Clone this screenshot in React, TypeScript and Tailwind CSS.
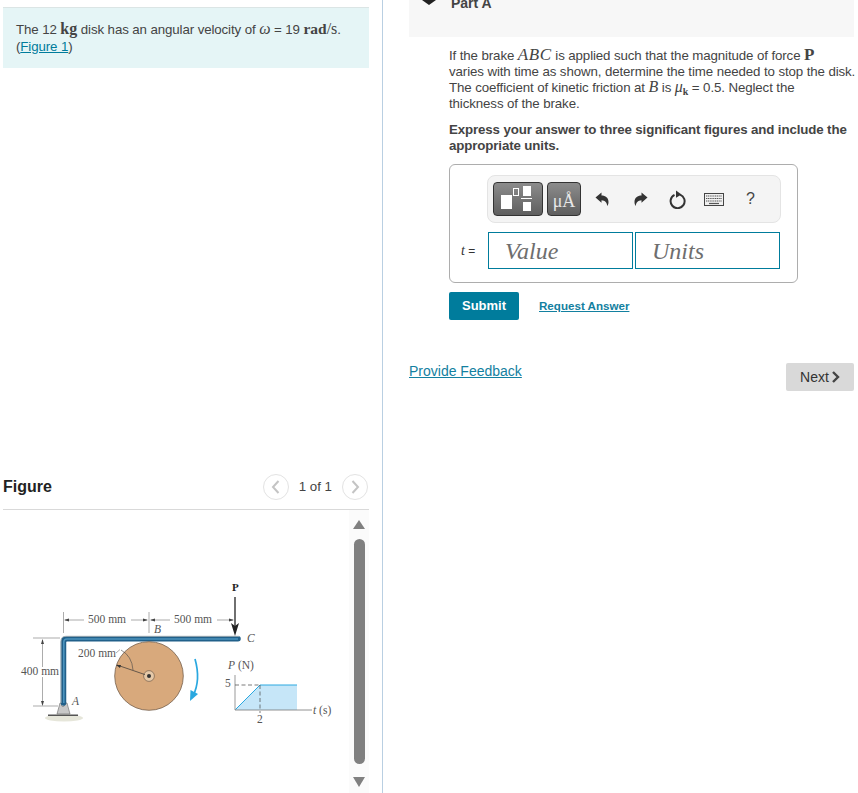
const Mi = ({ size = "text-[16px]", children }: { size?: string; children: React.ReactNode }) => (
  <span className={`font-['Liberation_Serif',serif] italic leading-[0] tracking-normal ${size}`}>{children}</span>
);

const Mb = ({ size = "text-[16px]", children }: { size?: string; children: React.ReactNode }) => (
  <span className={`font-['Liberation_Serif',serif] font-bold leading-[0] tracking-normal ${size}`}>{children}</span>
);

const Diagram = () => (
  <svg width="345" height="160" viewBox="0 570 345 160" className="block">
    {/* ground and pin */}
    <ellipse cx="64" cy="718" rx="19" ry="3.5" fill="#e6e6da" />
    <rect x="48" y="714.5" width="30" height="1.5" fill="#555" />
    <path d="M60 703 L67 703 L70 714 L57 714 Z" fill="#c8c8c8" stroke="#666" strokeWidth="0.6" />
    <circle cx="63" cy="705" r="1.5" fill="#eee" stroke="#444" strokeWidth="0.5" />

    {/* frame */}
    <path d="M63.5 703 V642 Q63.5 638.7 67 638.7 H238" fill="none" stroke="#21608a" strokeWidth="5.5" strokeLinecap="round" />
    <path d="M63.8 703 V642 Q63.8 639 67 639 H238" fill="none" stroke="#4b93bd" strokeWidth="1.6" />
    <path d="M61 703 V641 Q61 636.3 66 636.3 H239" fill="none" stroke="#a4afb5" strokeWidth="1" />

    {/* disk */}
    <circle cx="149" cy="676" r="34.3" fill="#d8a97c" stroke="#75604c" strokeWidth="0.8" />
    <circle cx="149" cy="676" r="5.4" fill="#e6c9a8" stroke="#75604c" strokeWidth="0.7" />
    <circle cx="149" cy="676" r="2" fill="#333" />
    <path d="M145 674.6 L117 665" stroke="#333" strokeWidth="0.7" />
    <path d="M116 665 L121 665 L120 668 Z" fill="#333" />
    <path d="M121 650 Q132 656 133 670" fill="none" stroke="#444" strokeWidth="0.6" />
    <path d="M116 653 L120 649.5" stroke="#777" strokeWidth="0.6" />

    {/* rotation arrow */}
    <path d="M195 659 Q201 680 193 696" fill="none" stroke="#2aa8e0" strokeWidth="1.7" />
    <path d="M190 701 L190.5 690 L198 694 Z" fill="#2aa8e0" />

    {/* dimensions */}
    <g stroke="#888" strokeWidth="0.7" fill="none">
      <path d="M63.5 612 V633" />
      <path d="M149 612 V633" />
      <path d="M65 620 H84" />
      <path d="M131 620 H147" />
      <path d="M151 620 H170" />
      <path d="M217 620 H233" />
      <path d="M33 638 H60" />
      <path d="M33 706 H58" />
      <path d="M42.5 640 V667 M42.5 677 V704" />
    </g>
    <g fill="#444">
      <path d="M64 620 L69 618.5 V621.5 Z" />
      <path d="M148 620 L143 618.5 V621.5 Z" />
      <path d="M150 620 L155 618.5 V621.5 Z" />
      <path d="M234 620 L229 618.5 V621.5 Z" />
      <path d="M42.5 639 L41 644 H44 Z" />
      <path d="M42.5 706 L41 701 H44 Z" />
    </g>

    {/* force P */}
    <path d="M235 597 V628" stroke="#222" strokeWidth="1.3" />
    <path d="M235 636 L231 623 L235 626 L239 623 Z" fill="#222" />

    {/* graph */}
    <path d="M235 710 L260 685 H297 V710 Z" fill="#c6e6f8" />
    <path d="M235 710 L260 685 H297" fill="none" stroke="#2aa8e0" strokeWidth="1" />
    <path d="M235 675 V710" stroke="#aaa" strokeWidth="1.2" />
    <path d="M235 710 H312" stroke="#777" strokeWidth="0.8" />
    <path d="M235 685 H260 M260 685 V713" stroke="#444" strokeWidth="0.7" strokeDasharray="4 2.5" />

    <g fontFamily="'Liberation Serif', serif" fontSize="11.5" fill="#555">
      <text x="88" y="623">500 mm</text>
      <text x="174" y="623">500 mm</text>
      <text x="78" y="657">200 mm</text>
      <text x="21" y="675">400 mm</text>
      <text x="154" y="633" fontStyle="italic">B</text>
      <text x="72" y="705" fontStyle="italic">A</text>
      <text x="247" y="642" fontStyle="italic">C</text>
      <text x="232" y="591" fontWeight="bold" fontSize="11" fill="#222">P</text>
      <text x="228" y="669"><tspan fontStyle="italic">P</tspan> (N)</text>
      <text x="225" y="687">5</text>
      <text x="257" y="723">2</text>
      <text x="313" y="714"><tspan fontStyle="italic">t</tspan> (s)</text>
    </g>
  </svg>
);

const UndoIcon = ({ flip }: { flip?: boolean }) => (
  <svg width="14" height="15" viewBox="0 0 14 15" className={flip ? "-scale-x-100" : ""}>
    <path d="M0.5 5.5 L6.5 0.5 V3.6 C10.5 3.6 13.5 6 13.5 10 C13.5 11.6 13 13 12.2 14 C12 10.6 10.2 8.4 6.5 8.2 V10.8 Z" fill="#333" />
  </svg>
);

const ResetIcon = () => (
  <svg width="17" height="19" viewBox="0 0 17 19">
    <path d="M5.5 4.9 A7 7 0 1 0 11 4.6" fill="none" stroke="#333" strokeWidth="2" />
    <path d="M7 0.5 L12.5 4.5 L7 7.8 Z" fill="#333" />
  </svg>
);

const KeyboardIcon = () => (
  <svg width="20" height="13" viewBox="0 0 20 13">
    <rect x="0.5" y="0.5" width="19" height="12" fill="#f0f0f0" stroke="#444" />
    <path d="M2 3 H18 M2 5.5 H18 M2 8 H18" stroke="#555" strokeWidth="1.2" strokeDasharray="1.2 0.6" />
    <path d="M5 10.5 H15" stroke="#555" strokeWidth="1.2" />
  </svg>
);

const App = () => {
  return (
    <div className="w-[858px] h-[793px] overflow-hidden flex bg-white font-['Liberation_Sans',Arial,sans-serif] text-[13.3px] leading-[16px] text-[#444]">
      {/* left pane */}
      <div className="w-[383px] h-full shrink-0 border-r border-[#b9cfe2] pl-[3px] pr-[13px] pt-[7px]">
        <div className="h-[61px] border-t border-[#dbe5e5] bg-[#e5f5f6] pl-[13px] pr-2 pt-[13px]">
          <p className="leading-[17px] tracking-[-0.11px]">
            The 12 <Mb>kg</Mb> disk has an angular velocity of <Mi>ω</Mi> = 19 <Mb size="text-[15.5px]">rad</Mb><span className="font-['Liberation_Serif',serif] text-[16px] leading-[0]">/s</span>.
            <br />
            (<span className="text-[#007c9c] underline">Figure 1</span>)
          </p>
        </div>

        <div className="mt-[408px] h-[34px] flex items-center justify-between border-b border-[#d9d9d9] pb-[11px]">
          <h2 className="text-[16px] font-bold text-[#222]">Figure</h2>
          <div className="flex items-center gap-[10px] pr-px">
            <div className="w-[26px] h-[26px] rounded-full border border-[#e3e3e3] flex items-center justify-center">
              <svg width="9" height="14" viewBox="0 0 9 14"><path d="M7.5 1 L2 7 L7.5 13" fill="none" stroke="#c4c4c4" strokeWidth="2" /></svg>
            </div>
            <span className="text-[#444]">1 of 1</span>
            <div className="w-[26px] h-[26px] rounded-full border border-[#e3e3e3] flex items-center justify-center">
              <svg width="9" height="14" viewBox="0 0 9 14"><path d="M1.5 1 L7 7 L1.5 13" fill="none" stroke="#c4c4c4" strokeWidth="2" /></svg>
            </div>
          </div>
        </div>

        <div className="flex">
          <div className="w-[345px] -ml-[3px] pt-[60px] shrink-0">
            <Diagram />
          </div>
          <div className="ml-[4px] w-[20px] h-[283px] bg-[#fbfbfb] flex flex-col items-center">
            <div className="mt-[10px] w-0 h-0 border-x-[6.5px] border-x-transparent border-b-[9px] border-b-[#808080]" />
            <div className="mt-[10px] w-[11px] h-[225px] rounded-full bg-[#808080]" />
            <div className="mt-[13px] w-0 h-0 border-x-[6.5px] border-x-transparent border-t-[10px] border-t-[#808080]" />
          </div>
        </div>
      </div>

      {/* right pane */}
      <div className="w-[475px] shrink-0 pl-[26px] pr-[4px]">
        <div className="h-[37px] bg-[#f7f7f7] relative">
          <div className="absolute left-[13px] top-0 w-0 h-0 border-x-[7px] border-x-transparent border-t-[5px] border-t-[#222]" />
          <span className="absolute left-[42px] -top-[5px] text-[14px] font-bold text-[#444]">Part A</span>
        </div>

        <div className="pl-[40px]">
          <p className="mt-[11px] whitespace-nowrap tracking-[-0.11px]">
            If the brake <Mi size="text-[17px]"><span className="tracking-[0.6px]">ABC</span></Mi> is applied such that the magnitude of force <Mb size="text-[17px]">P</Mb>
            <br />
            varies with time as shown, determine the time needed to stop the disk.
            <br />
            The coefficient of kinetic friction at <Mi>B</Mi> is <Mi>μ</Mi><sub className="font-['Liberation_Serif',serif] font-bold text-[10px] leading-[0]">k</sub> = 0.5. Neglect the
            <br />
            thickness of the brake.
          </p>
          <p className="mt-[10px] font-bold whitespace-nowrap tracking-[-0.125px]">
            Express your answer to three significant figures and include the
            <br />
            appropriate units.
          </p>

          <div className="mt-[10px] w-[349px] h-[119px] rounded-[6px] border border-[#adadad] pl-[8px] pt-[10px]">
            <div className="ml-[29px] w-[294px] h-[48px] rounded-[8px] border border-[#e4e4e4] bg-[#f4f4f4] flex items-center pl-[5px]">
              <div className="w-[50px] h-[34px] rounded-[4px] border border-[#333] bg-gradient-to-b from-[#8c8c8c] to-[#5f5f5f] relative">
                <div className="absolute left-[7px] top-[12px] w-[11px] h-[14px] bg-white" />
                <div className="absolute left-[19px] top-[5px] w-[6px] h-[8px] border border-white" />
                <div className="absolute left-[29px] top-[3px] w-[8px] h-[10px] bg-white" />
                <div className="absolute left-[27px] top-[15px] w-[11px] h-px bg-white" />
                <div className="absolute left-[29px] top-[19px] w-[8px] h-[9px] bg-white" />
              </div>
              <div className="ml-[4px] w-[34px] h-[34px] rounded-[4px] border border-[#333] bg-gradient-to-b from-[#8c8c8c] to-[#5f5f5f] flex items-center justify-center font-['Liberation_Serif',serif] text-[#e8e8e8] text-[18px] pt-[3px]">
                μÅ
              </div>
              <div className="ml-[14px]"><UndoIcon /></div>
              <div className="ml-[25px]"><UndoIcon flip /></div>
              <div className="ml-[21px]"><ResetIcon /></div>
              <div className="ml-[18px]"><KeyboardIcon /></div>
              <span className="ml-[22px] text-[16px] text-[#444]">?</span>
            </div>
            <div className="mt-[9px] flex items-center">
              <span className="w-[30px] pl-[3px] text-[12px] text-[#333]"><i className="font-['Liberation_Serif',serif] text-[14px]">t</i> =</span>
              <div className="w-[145px] h-[37px] border border-[#007c9c] pl-[16px] flex items-center font-['Liberation_Serif',serif] italic text-[24px] text-[#6e6e6e]">Value</div>
              <div className="ml-[2px] w-[145px] h-[37px] border border-[#007c9c] pl-[16px] flex items-center font-['Liberation_Serif',serif] italic text-[24px] text-[#6e6e6e]">Units</div>
            </div>
          </div>

          <div className="mt-[9px] flex items-center">
            <button className="w-[70px] h-[28px] rounded-[2px] bg-[#007c9c] text-white text-[13px] font-bold">Submit</button>
            <span className="ml-[20px] text-[11.6px] font-bold text-[#1380a0] underline">Request Answer</span>
          </div>
        </div>

        <div className="mt-[42px] flex justify-between items-start text-[14px]">
          <span className="mt-px text-[#1380a0] underline">Provide Feedback</span>
          <div className="w-[68px] h-[28px] mt-px rounded-[2px] bg-[#d9d9d9] flex items-center justify-center gap-[2px] text-[#333]">
            Next
            <svg width="9" height="12" viewBox="0 0 9 12"><path d="M2 1 L7 6 L2 11" fill="none" stroke="#444" strokeWidth="2.4" /></svg>
          </div>
        </div>
      </div>
    </div>
  );
};

export default App;
